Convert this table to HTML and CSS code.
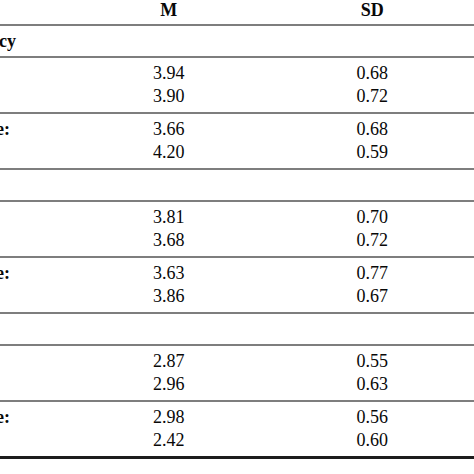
FILE: index.html
```html
<!DOCTYPE html>
<html>
<head>
<meta charset="utf-8">
<link rel="stylesheet" href="styles.css">
</head>
<body>
<div class="tbl">
  <div class="row head"><div class="lab"></div><div class="c">M</div><div class="c">SD</div></div>

  <div class="sec"><div class="lab"><span class="txt b">Self-Efficacy</span></div></div>
  <div class="grp">
    <div class="row"><div class="lab"></div><div class="c">3.94</div><div class="c">0.68</div></div>
    <div class="row"><div class="lab"></div><div class="c">3.90</div><div class="c">0.72</div></div>
  </div>
  <div class="grp">
    <div class="row"><div class="lab"><span class="txt b">Experience:</span></div><div class="c">3.66</div><div class="c">0.68</div></div>
    <div class="row"><div class="lab"></div><div class="c">4.20</div><div class="c">0.59</div></div>
  </div>

  <div class="sec"><div class="lab"></div></div>
  <div class="grp">
    <div class="row"><div class="lab"></div><div class="c">3.81</div><div class="c">0.70</div></div>
    <div class="row"><div class="lab"></div><div class="c">3.68</div><div class="c">0.72</div></div>
  </div>
  <div class="grp">
    <div class="row"><div class="lab"><span class="txt b">Experience:</span></div><div class="c">3.63</div><div class="c">0.77</div></div>
    <div class="row"><div class="lab"></div><div class="c">3.86</div><div class="c">0.67</div></div>
  </div>

  <div class="sec"><div class="lab"></div></div>
  <div class="grp">
    <div class="row"><div class="lab"></div><div class="c">2.87</div><div class="c">0.55</div></div>
    <div class="row"><div class="lab"></div><div class="c">2.96</div><div class="c">0.63</div></div>
  </div>
  <div class="grp last">
    <div class="row"><div class="lab"><span class="txt b">Experience:</span></div><div class="c">2.98</div><div class="c">0.56</div></div>
    <div class="row"><div class="lab"></div><div class="c">2.42</div><div class="c">0.60</div></div>
  </div>
</div>
</body>
</html>
```
FILE: styles.css
```css
html, body {
  margin: 0;
  padding: 0;
  background: #ffffff;
}
body {
  font-family: "Liberation Serif", "Times New Roman", serif;
  font-size: 18px;
  color: #080808;
  overflow: hidden;
}
.tbl {
  width: 474px;
  display: flex;
  flex-direction: column;
}
.row {
  display: grid;
  grid-template-columns: 67px 1fr 1fr;
  line-height: 23px;
  height: 23px;
}
.c {
  text-align: center;
}
.lab {
  white-space: nowrap;
  display: flex;
}
.txt {
  margin-left: -82px;
}
.b {
  font-weight: bold;
}
.head {
  height: 24px;
  line-height: 20px;
  font-weight: bold;
}
.sec {
  height: 30px;
  line-height: 30px;
  border-top: 2px solid #7e7e7e;
  display: flex;
  align-items: center;
}
.grp {
  height: 54px;
  border-top: 2px solid #7e7e7e;
  display: flex;
  flex-direction: column;
  justify-content: center;
}
.grp.last {
  border-bottom: 3px solid #1c1c1c;
}
```
